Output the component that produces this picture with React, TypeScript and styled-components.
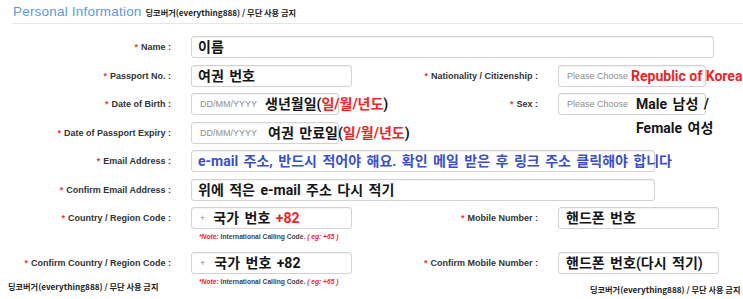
import React, { FC, ReactNode } from 'react'
import styled, { createGlobalStyle } from 'styled-components'

const GlobalStyle = createGlobalStyle`
    body {
        margin: 0;
        background: #fff;
        font-family: "Liberation Sans", Arial, sans-serif;
    }
`

const Page = styled.div`
    width: 743px;
    height: 299px;
    overflow: hidden;
`

const Header = styled.div`
    display: flex;
    align-items: center;
    gap: 4px;
    height: 23px;
    margin-left: 12px;
    padding-left: 1px;
    border-bottom: 1px solid #e6e6e6;
`

const Title = styled.span`
    font-size: 13.5px;
    letter-spacing: 0.2px;
    color: #5b9bd9;
    line-height: 1;
`

const Watermark = styled.span<{ $indent?: number; $top?: number }>`
    display: block;
    font-family: "Noto Sans CJK KR", sans-serif;
    font-size: 8.2px;
    font-weight: 700;
    color: #222;
    white-space: nowrap;
    line-height: 10px;
    margin-left: ${p => p.$indent || 0}px;
    margin-top: ${p => p.$top || 0}px;
`

const Form = styled.div`
    display: flex;
    flex-direction: column;
    gap: 6.5px;
    padding-top: 12px;
`

const Row = styled.div`
    display: flex;
    align-items: flex-start;
`

const Half = styled.div<{ $width?: number }>`
    display: flex;
    align-items: flex-start;
    flex: none;
    width: ${p => (p.$width ? `${p.$width}px` : 'auto')};
`

const LabelCell = styled.div<{ $width: number }>`
    display: flex;
    flex-direction: column;
    width: ${p => p.$width}px;
    flex: none;
`

const Label = styled.div`
    display: flex;
    align-items: center;
    justify-content: flex-end;
    height: 22px;
    padding-right: 1px;
    font-size: 9px;
    font-weight: 700;
    color: #333;
    white-space: nowrap;
`

const Star = styled.span`
    color: #e53935;
    margin-right: 3px;
    font-size: 9px;
`

const Field = styled.div`
    display: flex;
    flex-direction: column;
    margin-left: 19px;
`

const Box = styled.div<{ $width: number; $pad?: number }>`
    display: flex;
    align-items: center;
    box-sizing: border-box;
    width: ${p => p.$width}px;
    height: 22px;
    padding-left: ${p => p.$pad || 6}px;
    border: 1px solid #d2d2d2;
    border-radius: 3px;
    background: #fff;
    box-shadow: inset 0 1px 1px rgba(0, 0, 0, 0.05);
    white-space: nowrap;
    overflow: visible;
`

const Placeholder = styled.span<{ $gap?: number }>`
    font-size: 9px;
    color: #8c8c8c;
    margin-right: ${p => p.$gap || 0}px;
    flex: none;
`

const Value = styled.span<{ $color?: string; $lines?: boolean; $tight?: boolean }>`
    font-family: Roboto, "Noto Sans CJK KR", sans-serif;
    font-size: 14px;
    font-weight: 700;
    word-spacing: ${p => (p.$tight ? '0' : '2px')};
    color: ${p => p.$color || '#161616'};
    line-height: ${p => (p.$lines ? '24px' : '22px')};
    height: 22px;
    align-self: flex-start;
    margin-top: ${p => (p.$lines ? '-2px' : '-1px')};
    white-space: pre;
`

const Red = styled.span`
    color: #ec2528;
`

const Note = styled.div`
    margin: 2px 0 2px 8px;
    height: 12px;
    line-height: 12px;
    font-size: 6.7px;
    font-weight: 700;
    color: #444;
    white-space: nowrap;
`

const NoteRed = styled.span`
    color: #ec2528;
    font-style: italic;
`

type FieldProps = {
    label: string
    labelWidth: number
    below?: ReactNode
    children: ReactNode
}

const FormField: FC<FieldProps> = ({ label, labelWidth, below, children }) => (
    <>
        <LabelCell $width={labelWidth}>
            <Label>
                <Star>*</Star>
                {label}
            </Label>
            {below}
        </LabelCell>
        <Field>{children}</Field>
    </>
)

const CallingNote: FC = () => (
    <Note>
        <NoteRed>*Note:</NoteRed> International Calling Code. <NoteRed>( eg: +65 )</NoteRed>
    </Note>
)

const WATERMARK = '딩코버거(everything888) / 무단 사용 금지'

const App: FC = () => (
    <Page>
        <GlobalStyle />
        <Header>
            <Title>Personal Information</Title>
            <Watermark>{WATERMARK}</Watermark>
        </Header>
        <Form>
            <Row>
                <FormField label="Name :" labelWidth={172}>
                    <Box $width={523}>
                        <Value>이름</Value>
                    </Box>
                </FormField>
            </Row>
            <Row>
                <Half $width={372}>
                    <FormField label="Passport No. :" labelWidth={172}>
                        <Box $width={161}>
                            <Value>여권 번호</Value>
                        </Box>
                    </FormField>
                </Half>
                <Half>
                    <FormField label="Nationality / Citizenship :" labelWidth={167}>
                        <Box $width={148} $pad={8}>
                            <Placeholder $gap={3}>Please Choose</Placeholder>
                            <Value $color="#ec2528" $tight>
                                Republic of Korea
                            </Value>
                        </Box>
                    </FormField>
                </Half>
            </Row>
            <Row>
                <Half $width={372}>
                    <FormField label="Date of Birth :" labelWidth={172}>
                        <Box $width={148} $pad={8}>
                            <Placeholder $gap={8}>DD/MM/YYYY</Placeholder>
                            <Value>
                                생년월일(<Red>일/월/년도</Red>)
                            </Value>
                        </Box>
                    </FormField>
                </Half>
                <Half>
                    <FormField label="Sex :" labelWidth={167}>
                        <Box $width={148} $pad={8}>
                            <Placeholder $gap={8}>Please Choose</Placeholder>
                            <Value $lines>{'Male 남성 /\nFemale 여성'}</Value>
                        </Box>
                    </FormField>
                </Half>
            </Row>
            <Row>
                <FormField label="Date of Passport Expiry :" labelWidth={172}>
                    <Box $width={148} $pad={8}>
                        <Placeholder $gap={11}>DD/MM/YYYY</Placeholder>
                        <Value>
                            여권 만료일(<Red>일/월/년도</Red>)
                        </Value>
                    </Box>
                </FormField>
            </Row>
            <Row>
                <FormField label="Email Address :" labelWidth={172}>
                    <Box $width={464}>
                        <Value $color="#3b4fc4">
                            e-mail 주소, 반드시 적어야 해요. 확인 메일 받은 후 링크 주소 클릭해야 합니다
                        </Value>
                    </Box>
                </FormField>
            </Row>
            <Row>
                <FormField label="Confirm Email Address :" labelWidth={172}>
                    <Box $width={464}>
                        <Value>위에 적은 e-mail 주소 다시 적기</Value>
                    </Box>
                </FormField>
            </Row>
            <Row>
                <Half $width={372}>
                    <FormField label="Country / Region Code :" labelWidth={172}>
                        <Box $width={161} $pad={8}>
                            <Placeholder $gap={8}>+</Placeholder>
                            <Value>
                                국가 번호 <Red>+82</Red>
                            </Value>
                        </Box>
                        <CallingNote />
                    </FormField>
                </Half>
                <Half>
                    <FormField label="Mobile Number :" labelWidth={167}>
                        <Box $width={161} $pad={7}>
                            <Value>핸드폰 번호</Value>
                        </Box>
                    </FormField>
                </Half>
            </Row>
            <Row>
                <Half $width={372}>
                    <FormField
                        label="Confirm Country / Region Code :"
                        labelWidth={172}
                        below={
                            <Watermark $indent={8} $top={7}>
                                {WATERMARK}
                            </Watermark>
                        }
                    >
                        <Box $width={161} $pad={8}>
                            <Placeholder $gap={9}>+</Placeholder>
                            <Value>국가 번호 +82</Value>
                        </Box>
                        <CallingNote />
                    </FormField>
                </Half>
                <Half>
                    <FormField label="Confirm Mobile Number :" labelWidth={167}>
                        <Box $width={161} $pad={7}>
                            <Value>핸드폰 번호(다시 적기)</Value>
                        </Box>
                        <Watermark $indent={32} $top={10}>
                            {WATERMARK}
                        </Watermark>
                    </FormField>
                </Half>
            </Row>
        </Form>
    </Page>
)

export default App
